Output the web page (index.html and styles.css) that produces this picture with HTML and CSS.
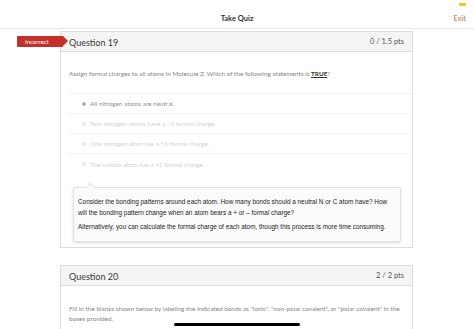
FILE: index.html
```html
<!DOCTYPE html>
<html>
<head>
<meta charset="utf-8">
<link rel="stylesheet" href="styles.css">
</head>
<body>
<div class="page">
  <div class="status"><span class="battery"></span></div>
  <header class="topbar">
    <div class="side"></div>
    <div class="title">Take Quiz</div>
    <div class="side exit">Exit</div>
  </header>
  <main class="content">
    <section class="card">
      <div class="badge">Incorrect</div>
      <div class="card-head">
        <span class="qname">Question 19</span>
        <span class="pts">0 / 1.5 pts</span>
      </div>
      <div class="card-body">
        <p class="qtext">Assign formal charges to all atoms in Molecule Z. Which of the following statements is <b class="true">TRUE</b>?</p>
        <ul class="answers">
          <li class="answer selected"><span class="radio"></span>All nitrogen atoms are neutral.</li>
          <li class="answer"><span class="radio"></span>Two nitrogen atoms have a −1 formal charge.</li>
          <li class="answer"><span class="radio"></span>One nitrogen atom has a +1 formal charge.</li>
          <li class="answer"><span class="radio"></span>The carbon atom has a +1 formal charge.</li>
        </ul>
        <div class="tip">
          <p>Consider the bonding patterns around each atom. How many bonds should a neutral N or C atom have? How will the bonding pattern change when an atom bears a + or – formal charge?</p>
          <p>Alternatively, you can calculate the formal charge of each atom, though this process is more time consuming.</p>
        </div>
      </div>
    </section>
    <section class="card card2">
      <div class="card-head">
        <span class="qname">Question 20</span>
        <span class="pts">2 / 2 pts</span>
      </div>
      <div class="card-body">
        <p class="qtext q2">Fill in the blanks shown below by labeling the indicated bonds as "ionic", "non-polar covalent", or "polar covalent" in the boxes provided.</p>
      </div>
    </section>
  </main>
  <div class="homebar"></div>
</div>
</body>
</html>
```
FILE: styles.css
```css
* { box-sizing: border-box; }
html, body { margin: 0; padding: 0; background: #fff; }
body { font-family: Lato, "Open Sans", "Liberation Sans", sans-serif; color: #333; }
.page { position: relative; width: 474px; height: 329px; overflow: hidden; }
.status { height: 9px; position: relative; }
.battery { position: absolute; left: 459px; top: 3px; width: 7px; height: 3px; background: #f2c230; border-radius: 1px; }
.topbar { height: 20px; display: flex; align-items: center; justify-content: space-between; border-bottom: 1px solid #e6e6e6; padding: 0 8px 0; }
.side { width: 40px; }
.title { font-size: 7.5px; font-weight: 700; color: #333; }
.exit { text-align: right; font-size: 7.5px; color: #b9733a; }
.content { padding: 2px 0 0 60px; }
.card { position: relative; width: 353px; border: 1px solid #dcdcdc; background: #fff; }
.card2 { margin-top: 17px; }
.card-head { height: 20px; background: #f4f4f4; border-bottom: 1px solid #dedede; display: flex; justify-content: space-between; align-items: center; padding: 0 8px; }
.qname { font-size: 9px; color: #3a3a3a; padding-top: 2px; }
.pts { font-size: 7.5px; color: #555; padding-bottom: 1px; }
.card-body { padding: 0 0 5px 8px; }
.qtext { margin: 0; padding: 17px 0 0; font-size: 6.4px; line-height: 10px; color: #858585; }
.true { color: #333; text-decoration: underline; font-weight: 700; }
.answers { list-style: none; margin: 14px 0 0; padding: 0; border-top: 1px solid #f0f0f0; }
.answer { height: 20px; display: flex; align-items: center; padding-left: 13px; font-size: 6.4px; color: #d2d2d2; border-bottom: 1px solid #f3f3f3; }
.answer:last-child { border-bottom: none; }
.answer.selected { color: #8f8f8f; }
.radio { width: 4px; height: 4px; border: 0.6px solid #e2e2e2; background: #fff; border-radius: 50%; margin-right: 4px; flex: none; }
.selected .radio { background: #b0b0b0; border-color: #b0b0b0; }
.tip { position: relative; margin: 13px 11px 0 4px; background: #fbfbfb; border: 1px solid #e3e3e3; border-radius: 2px; box-shadow: 0 1px 3px rgba(0,0,0,0.15); padding: 8px 3px 9px 4px; font-family: "Liberation Sans", Arial, sans-serif; font-size: 6.4px; line-height: 11px; color: #222; }
.tip::before { content: ""; position: absolute; left: 13px; top: -4px; width: 6px; height: 6px; background: #fbfbfb; border-left: 1px solid #e3e3e3; border-top: 1px solid #e3e3e3; transform: rotate(45deg); }
.tip p { margin: 0 0 3px; }
.tip p:last-child { margin: 0; }
.q2 { padding-top: 18px; padding-right: 6px; }
.badge { position: absolute; left: -44px; top: 4px; height: 11px; width: 46px; background: #c2302b; color: #fff; font-size: 6px; line-height: 11px; padding-left: 8px; border-radius: 1px 0 0 1px; z-index: 2; }
.badge::after { content: ""; position: absolute; right: -5px; top: 0; border-left: 5px solid #c2302b; border-top: 5.5px solid transparent; border-bottom: 5.5px solid transparent; }
.homebar { position: absolute; left: 174px; top: 323px; width: 126px; height: 3px; background: #000; border-radius: 2px; }
```
